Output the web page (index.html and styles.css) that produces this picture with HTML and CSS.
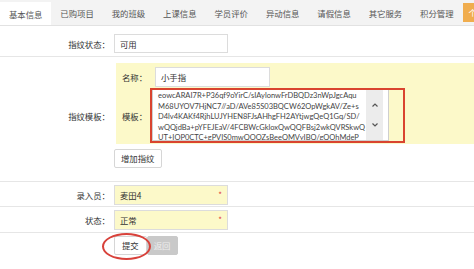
FILE: index.html
```html
<!DOCTYPE html>
<html lang="zh-CN">
<head>
<meta charset="utf-8">
<title>基本信息</title>
<link rel="stylesheet" href="styles.css">
</head>
<body>
<div class="tabs">
  <div class="tab active">基本信息</div>
  <div class="tab">已购项目</div>
  <div class="tab">我的班级</div>
  <div class="tab">上课信息</div>
  <div class="tab">学员评价</div>
  <div class="tab">异动信息</div>
  <div class="tab">请假信息</div>
  <div class="tab">其它服务</div>
  <div class="tab">积分管理</div>
  <div class="tab more">个人中心</div>
</div>
<div class="form">
  <div class="row r1">
    <div class="label">指纹状态：</div>
    <div class="field"><div class="input short">可用</div></div>
  </div>
  <div class="row r2">
    <div class="label">指纹模板：</div>
    <div class="field">
      <div class="panel">
        <div class="plabel">名称：</div>
        <div class="input name">小手指</div>
        <div class="plabel">模板：</div>
        <div class="mark">
          <div class="ta">
            <div class="ta-text">
              <div>eowcARAI7R+P36qf9oYirC/sIAylonwFrDBQDz3nWpJgcAqu</div>
              <div>M68UYOV7HjNC7//aD/AVe85S03BQCW62OpWgkAV/Ze+s</div>
              <div>D4lv4KAKf4RjhLUJYHEN8FJsAHhgFH2AYtjwgQeQ1Gq/SD/</div>
              <div>wQQjdBa+pYFEJEaV/4FCBWcGkloxQwQQFBsj2wkQVRSkwQ</div>
              <div>UT+IOP0CTC+gPVIS0mwQOOZsBeeQMVyIBQ/gQOhMdeP</div>
            </div>
            <div class="sb">
              <svg width="8" height="8" viewBox="0 0 8 8"><path d="M1.5 5.5 L4 3 L6.5 5.5" fill="none" stroke="#555" stroke-width="1.2"/></svg>
              <svg width="8" height="8" viewBox="0 0 8 8"><path d="M1.5 2.5 L4 5 L6.5 2.5" fill="none" stroke="#555" stroke-width="1.2"/></svg>
            </div>
          </div>
        </div>
      </div>
      <button class="btn add">增加指纹</button>
    </div>
  </div>
  <div class="row r3">
    <div class="label">录入员：</div>
    <div class="field"><div class="input yellow"><span>麦田4</span><span class="req">*</span></div></div>
  </div>
  <div class="row r4">
    <div class="label">状态：</div>
    <div class="field"><div class="input yellow"><span>正常</span><span class="req">*</span></div></div>
  </div>
  <div class="actions">
    <span class="circle"></span>
    <button class="btn submit">提交</button>
    <button class="btn back">返回</button>
  </div>
</div>
</body>
</html>
```
FILE: styles.css
```css
html, body {
  margin: 0;
  padding: 0;
}
body {
  width: 474px;
  height: 269px;
  overflow: hidden;
  background: #fff;
  color: #333;
  font-family: "Noto Sans CJK SC", "Noto Sans", sans-serif;
  font-size: 8.4px;
}
.tabs {
  display: flex;
  align-items: flex-end;
  height: 25px;
  background: #f3f3f3;
  border-bottom: 1px solid #e2e2e2;
  overflow: hidden;
}
.tab {
  flex: 0 0 51.4px;
  height: 23px;
  line-height: 23px;
  text-align: center;
  color: #555;
  white-space: nowrap;
}
.tab.active {
  background: #fff;
  height: 24px;
  line-height: 25px;
  margin-bottom: -1px;
}
.tab.more {
  flex: 0 0 40px;
  height: 19px;
  line-height: 19px;
  margin-bottom: 3px;
  background: #f0ad4e;
  color: #fff;
  text-align: left;
  padding-left: 6px;
  overflow: hidden;
}
.row {
  display: grid;
  grid-template-columns: 110px 1fr;
  column-gap: 4px;
  align-items: center;
  border-bottom: 1px solid #e6e6e6;
}
.label {
  text-align: right;
  white-space: nowrap;
}
.field {
  display: flex;
  flex-direction: column;
  align-items: flex-start;
}
.input {
  box-sizing: border-box;
  width: 114px;
  height: 20px;
  border: 1px solid #dcdcdc;
  background: #fff;
  padding: 0 5px;
  display: flex;
  align-items: center;
  justify-content: space-between;
  white-space: nowrap;
}
.input.short {
  height: 19px;
}
.input.yellow {
  background: #fcf9c9;
}
.req {
  color: #e03a3a;
  font-size: 8px;
  line-height: 1;
}
.r1 {
  padding: 8px 0 3px;
}
.r2 {
  padding: 6px 0 13px;
}
.r3 {
  padding: 3px 0 1px;
}
.r4 {
  padding: 3px 0 2px;
}
.panel {
  box-sizing: border-box;
  align-self: stretch;
  margin-left: 2px;
  background: #fcf9c9;
  padding: 4px 0 1px 6px;
  display: grid;
  grid-template-columns: 28px auto;
  row-gap: 1px;
  align-items: center;
  justify-items: start;
}
.plabel {
  white-space: nowrap;
}
.input.name {
  margin-left: 5px;
  width: 115px;
}
.mark {
  box-sizing: border-box;
  width: 255px;
  height: 55px;
  border: 2px solid #d9442f;
}
.ta {
  box-sizing: border-box;
  width: 237px;
  height: 100%;
  border: 1px solid #cfcfcf;
  border-top: none;
  background: #fff;
  display: flex;
  overflow: hidden;
}
.ta-text {
  flex: 0 0 213px;
  width: 213px;
  box-sizing: border-box;
  padding: 1px 0 0 5px;
  font-family: "Lato", "Liberation Sans", sans-serif;
  font-size: 7.5px;
  line-height: 10.5px;
  color: #444;
  white-space: nowrap;
  overflow: hidden;
}
.sb {
  flex: 0 0 17px;
  width: 17px;
  background: #ececec;
  display: flex;
  flex-direction: column;
  align-items: center;
  padding-top: 11px;
  gap: 12px;
}
.sb svg {
  display: block;
}
.btn {
  box-sizing: border-box;
  height: 19px;
  margin: 0;
  padding: 0 6px;
  border: 1px solid #d6d6d6;
  border-radius: 2px;
  background: #fff;
  color: #333;
  font: inherit;
  line-height: 17px;
  white-space: nowrap;
}
.btn.add {
  margin-top: 5px;
  padding: 0 6px;
}
.actions {
  position: relative;
  display: flex;
  margin: 3px 0 0 114px;
}
.btn.submit {
  padding: 0 7px;
}
.btn.back {
  padding: 0 6px;
  background: #c9c9c9;
  border-color: #c9c9c9;
  color: #eee;
}
.circle {
  position: absolute;
  left: -12px;
  top: -3px;
  width: 49px;
  height: 27px;
  box-sizing: border-box;
  border: 2px solid #d8413a;
  border-radius: 50%;
  pointer-events: none;
}
```
